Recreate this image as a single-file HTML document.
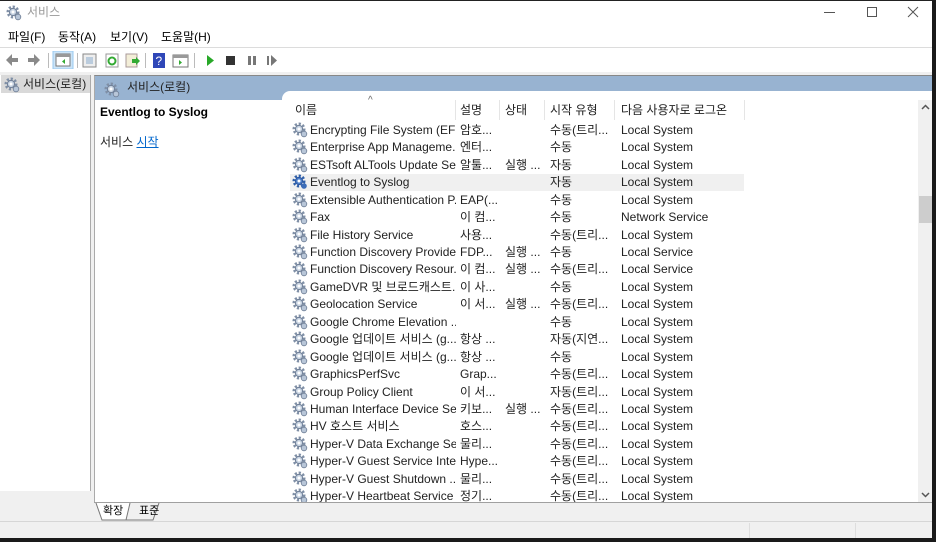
<!DOCTYPE html>
<html><head><meta charset="utf-8"><style>
*{margin:0;padding:0;box-sizing:border-box}
body{width:936px;height:542px;overflow:hidden;background:#fff;font-family:"Liberation Sans","Noto Sans CJK KR",sans-serif;font-size:12px;color:#000;position:relative}
.a{position:absolute;white-space:nowrap;line-height:15px}
.row{position:absolute;left:290px;width:454px;height:17px}
.row span{position:absolute;top:1px;white-space:nowrap;font-size:12px;line-height:15px;height:15px;color:#222;overflow:hidden}
.row span:nth-of-type(1){width:146px}
.row svg{position:absolute;left:2px;top:0}
.sep{position:absolute;top:100px;width:1px;height:20px;background:#e5e5e5}
</style></head><body>
<svg width="0" height="0" style="position:absolute"><defs>
<g id="gear"><circle cx="7" cy="7" r="5.2" fill="none" stroke="#7f8fa6" stroke-width="2.6" stroke-dasharray="2.2 1.8"/><circle cx="7" cy="7" r="3.6" fill="#c7d3e2" stroke="#6e7e96" stroke-width="1"/><circle cx="7" cy="7" r="1.5" fill="#fff"/><circle cx="12" cy="12" r="2.8" fill="#b8c6d8" stroke="#6e7e96" stroke-width="0.8"/></g>
<g id="gearb"><circle cx="7" cy="7" r="5.2" fill="none" stroke="#2f5fa8" stroke-width="2.6" stroke-dasharray="2.2 1.8"/><circle cx="7" cy="7" r="3.6" fill="#4d7fc9" stroke="#2a55a0" stroke-width="1"/><circle cx="7" cy="7" r="1.5" fill="#fff"/><circle cx="12" cy="12" r="2.8" fill="#3b6cb8"/></g>
</defs></svg>
<div class="a" style="left:0;top:0;width:936px;height:1px;background:#222"></div>
<div class="a" style="right:0;top:0;width:4px;height:542px;background:#1a1a1a"></div>
<div class="a" style="left:0;bottom:0;width:936px;height:4px;background:#1a1a1a"></div>
<svg class="a" style="left:6px;top:5px" width="16" height="16"><use href="#gear"/></svg>
<div class="a" style="left:27px;top:5px;color:#999;font-size:12px">서비스</div>
<div class="a" style="left:824px;top:12px;width:11px;height:1px;background:#555"></div>
<div class="a" style="left:867px;top:7px;width:10px;height:10px;border:1px solid #555"></div>
<svg class="a" style="left:907px;top:6px" width="12" height="12"><path d="M1 1L11 11M11 1L1 11" stroke="#555" stroke-width="1"/></svg>
<div class="a" style="left:8px;top:30px;font-size:12px">파일(F)</div>
<div class="a" style="left:58px;top:30px;font-size:12px">동작(A)</div>
<div class="a" style="left:110px;top:30px;font-size:12px">보기(V)</div>
<div class="a" style="left:161px;top:30px;font-size:12px">도움말(H)</div>
<div class="a" style="left:0;top:47px;width:932px;height:1px;background:#dcdcdc"></div>
<svg class="a" style="left:3px;top:51px" width="290" height="18">
<path d="M3 9l6-6v4h6v4h-6v4z" fill="#8a8a8a"/><path d="M37 9l-6-6v4h-6v4h6v4z" fill="#8a8a8a"/>
<rect x="45" y="2" width="1" height="15" fill="#bbb"/>
<rect x="50" y="0" width="20" height="18" fill="#cce4f7" stroke="#99c9ef"/>
<rect x="53" y="3" width="14" height="12" fill="#fff" stroke="#777"/><rect x="53" y="3" width="14" height="3" fill="#999"/><path d="M62 8l-3 2.5 3 2.5z" fill="#3a3"/>
<rect x="74" y="2" width="1" height="15" fill="#bbb"/>
<rect x="80" y="3" width="13" height="13" fill="#eee" stroke="#888"/><rect x="83" y="6" width="7" height="7" fill="#bcd"/>
<rect x="103" y="3" width="12" height="13" fill="#fff" stroke="#999"/><circle cx="109" cy="10" r="3.5" fill="none" stroke="#3a3" stroke-width="2"/>
<rect x="123" y="3" width="11" height="13" fill="#f3eed8" stroke="#a99"/><path d="M129 8h4v-2l4 4-4 4v-2h-4z" fill="#3a3"/>
<rect x="142" y="2" width="1" height="15" fill="#bbb"/>
<rect x="150" y="2" width="12" height="15" fill="#2f47b8"/><text x="152.5" y="14" fill="#fff" font-size="12" font-family="Liberation Sans">?</text>
<rect x="170" y="4" width="15" height="12" fill="#fff" stroke="#777"/><rect x="170" y="4" width="15" height="3" fill="#999"/><path d="M176 9v5l3-2.5z" fill="#3a3"/>
<rect x="191" y="2" width="1" height="15" fill="#bbb"/>
<path d="M204 4v11l7-5.5z" fill="#28a828"/>
<rect x="223" y="5" width="9" height="9" fill="#333"/>
<rect x="245" y="5" width="3" height="9" fill="#777"/><rect x="250" y="5" width="3" height="9" fill="#777"/>
<rect x="264" y="5" width="2" height="9" fill="#777"/><path d="M268 4v11l6-5.5z" fill="#777"/>
</svg>
<div class="a" style="left:0;top:72px;width:932px;height:466px;background:#f0f0f0"></div>
<div class="a" style="left:0;top:75px;width:91px;height:416px;background:#fff;border-right:1px solid #aaa"></div>
<div class="a" style="left:1px;top:75px;width:89px;height:18px;background:#d9d9d9"></div>
<svg class="a" style="left:4px;top:77px" width="16" height="16"><use href="#gear"/></svg>
<div class="a" style="left:23px;top:77px;font-size:12px;color:#222">서비스(로컬)</div>
<div class="a" style="left:94px;top:75px;width:838px;height:427px;background:#fff;border-left:1px solid #aaa;border-top:1px solid #888"></div>
<div class="a" style="left:95px;top:76px;width:837px;height:24px;background:#98b3d1"></div>
<div class="a" style="left:282px;top:91px;width:650px;height:12px;background:#fff;border-radius:8px 0 0 0"></div>
<svg class="a" style="left:104px;top:82px" width="16" height="16"><use href="#gear"/></svg>
<div class="a" style="left:127px;top:80px;font-size:12px;color:#222">서비스(로컬)</div>
<div class="a" style="left:100px;top:105px;font-weight:bold;font-size:12px">Eventlog to Syslog</div>
<div class="a" style="left:100px;top:135px;font-size:12px;color:#222">서비스 <span style="color:#0066cc;text-decoration:underline">시작</span></div>
<div class="a" style="left:295px;top:103px;font-size:12px;color:#222">이름</div>
<div class="a" style="left:368px;top:93px;font-size:10px;color:#666">^</div>
<div class="sep" style="left:455px"></div><div class="sep" style="left:499px"></div><div class="sep" style="left:544px"></div><div class="sep" style="left:614px"></div><div class="sep" style="left:744px"></div>
<div class="a" style="left:460px;top:103px;font-size:12px;color:#222">설명</div>
<div class="a" style="left:505px;top:103px;font-size:12px;color:#222">상태</div>
<div class="a" style="left:550px;top:103px;font-size:12px;color:#222">시작 유형</div>
<div class="a" style="left:621px;top:103px;font-size:12px;color:#222">다음 사용자로 로그온</div>
<div class="row" style="top:122px"><svg width="17" height="17"><use href="#gear"/></svg><span style="left:20px">Encrypting File System (EFS)</span><span style="left:170px">암호...</span><span style="left:260px">수동(트리...</span><span style="left:331px">Local System</span></div>
<div class="row" style="top:139.4px"><svg width="17" height="17"><use href="#gear"/></svg><span style="left:20px">Enterprise App Manageme...</span><span style="left:170px">엔터...</span><span style="left:260px">수동</span><span style="left:331px">Local System</span></div>
<div class="row" style="top:156.9px"><svg width="17" height="17"><use href="#gear"/></svg><span style="left:20px">ESTsoft ALTools Update Se...</span><span style="left:170px">알툴...</span><span style="left:215px">실행 ...</span><span style="left:260px">자동</span><span style="left:331px">Local System</span></div>
<div class="row" style="top:174.3px;background:#f0f0f0"><svg width="17" height="17"><use href="#gearb"/></svg><span style="left:20px">Eventlog to Syslog</span><span style="left:260px">자동</span><span style="left:331px">Local System</span></div>
<div class="row" style="top:191.7px"><svg width="17" height="17"><use href="#gear"/></svg><span style="left:20px">Extensible Authentication P...</span><span style="left:170px">EAP(...</span><span style="left:260px">수동</span><span style="left:331px">Local System</span></div>
<div class="row" style="top:209.2px"><svg width="17" height="17"><use href="#gear"/></svg><span style="left:20px">Fax</span><span style="left:170px">이 컴...</span><span style="left:260px">수동</span><span style="left:331px">Network Service</span></div>
<div class="row" style="top:226.6px"><svg width="17" height="17"><use href="#gear"/></svg><span style="left:20px">File History Service</span><span style="left:170px">사용...</span><span style="left:260px">수동(트리...</span><span style="left:331px">Local System</span></div>
<div class="row" style="top:244px"><svg width="17" height="17"><use href="#gear"/></svg><span style="left:20px">Function Discovery Provide...</span><span style="left:170px">FDP...</span><span style="left:215px">실행 ...</span><span style="left:260px">수동</span><span style="left:331px">Local Service</span></div>
<div class="row" style="top:261.4px"><svg width="17" height="17"><use href="#gear"/></svg><span style="left:20px">Function Discovery Resour...</span><span style="left:170px">이 컴...</span><span style="left:215px">실행 ...</span><span style="left:260px">수동(트리...</span><span style="left:331px">Local Service</span></div>
<div class="row" style="top:278.9px"><svg width="17" height="17"><use href="#gear"/></svg><span style="left:20px">GameDVR 및 브로드캐스트...</span><span style="left:170px">이 사...</span><span style="left:260px">수동</span><span style="left:331px">Local System</span></div>
<div class="row" style="top:296.3px"><svg width="17" height="17"><use href="#gear"/></svg><span style="left:20px">Geolocation Service</span><span style="left:170px">이 서...</span><span style="left:215px">실행 ...</span><span style="left:260px">수동(트리...</span><span style="left:331px">Local System</span></div>
<div class="row" style="top:313.7px"><svg width="17" height="17"><use href="#gear"/></svg><span style="left:20px">Google Chrome Elevation ...</span><span style="left:260px">수동</span><span style="left:331px">Local System</span></div>
<div class="row" style="top:331.2px"><svg width="17" height="17"><use href="#gear"/></svg><span style="left:20px">Google 업데이트 서비스 (g...</span><span style="left:170px">항상 ...</span><span style="left:260px">자동(지연...</span><span style="left:331px">Local System</span></div>
<div class="row" style="top:348.6px"><svg width="17" height="17"><use href="#gear"/></svg><span style="left:20px">Google 업데이트 서비스 (g...</span><span style="left:170px">항상 ...</span><span style="left:260px">수동</span><span style="left:331px">Local System</span></div>
<div class="row" style="top:366px"><svg width="17" height="17"><use href="#gear"/></svg><span style="left:20px">GraphicsPerfSvc</span><span style="left:170px">Grap...</span><span style="left:260px">수동(트리...</span><span style="left:331px">Local System</span></div>
<div class="row" style="top:383.5px"><svg width="17" height="17"><use href="#gear"/></svg><span style="left:20px">Group Policy Client</span><span style="left:170px">이 서...</span><span style="left:260px">자동(트리...</span><span style="left:331px">Local System</span></div>
<div class="row" style="top:400.9px"><svg width="17" height="17"><use href="#gear"/></svg><span style="left:20px">Human Interface Device Se...</span><span style="left:170px">키보...</span><span style="left:215px">실행 ...</span><span style="left:260px">수동(트리...</span><span style="left:331px">Local System</span></div>
<div class="row" style="top:418.3px"><svg width="17" height="17"><use href="#gear"/></svg><span style="left:20px">HV 호스트 서비스</span><span style="left:170px">호스...</span><span style="left:260px">수동(트리...</span><span style="left:331px">Local System</span></div>
<div class="row" style="top:435.8px"><svg width="17" height="17"><use href="#gear"/></svg><span style="left:20px">Hyper-V Data Exchange Se...</span><span style="left:170px">물리...</span><span style="left:260px">수동(트리...</span><span style="left:331px">Local System</span></div>
<div class="row" style="top:453.2px"><svg width="17" height="17"><use href="#gear"/></svg><span style="left:20px">Hyper-V Guest Service Inte...</span><span style="left:170px">Hype...</span><span style="left:260px">수동(트리...</span><span style="left:331px">Local System</span></div>
<div class="row" style="top:470.6px"><svg width="17" height="17"><use href="#gear"/></svg><span style="left:20px">Hyper-V Guest Shutdown ...</span><span style="left:170px">물리...</span><span style="left:260px">수동(트리...</span><span style="left:331px">Local System</span></div>
<div class="row" style="top:488px;height:14px;overflow:hidden"><svg width="17" height="17"><use href="#gear"/></svg><span style="left:20px">Hyper-V Heartbeat Service</span><span style="left:170px">정기...</span><span style="left:260px">수동(트리...</span><span style="left:331px">Local System</span></div>
<div class="a" style="left:918px;top:100px;width:14px;height:402px;background:#f0f0f0"></div>
<svg class="a" style="left:921px;top:104px" width="9" height="6"><path d="M1 5l3.5-3.5L8 5" stroke="#555" stroke-width="1.5" fill="none"/></svg>
<svg class="a" style="left:921px;top:492px" width="9" height="6"><path d="M1 1l3.5 3.5L8 1" stroke="#555" stroke-width="1.5" fill="none"/></svg>
<div class="a" style="left:919px;top:196px;width:13px;height:27px;background:#cdcdcd"></div>
<div class="a" style="left:94px;top:502px;width:838px;height:1px;background:#a0a0a0"></div>
<svg class="a" style="left:94px;top:503px" width="80" height="18"><path d="M34 0l-4 17h29l6-17" fill="#f0f0f0" stroke="#777"/><path d="M2 0l6 17h24l4-17" fill="#fff" stroke="#777"/></svg>
<div class="a" style="left:103px;top:504px;font-size:11px">확장</div>
<div class="a" style="left:139px;top:504px;font-size:11px">표준</div>
<div class="a" style="left:0;top:521px;width:932px;height:1px;background:#d6d6d6"></div>
<div class="a" style="left:0;top:522px;width:932px;height:16px;background:#f0f0f0"></div>
<div class="a" style="left:749px;top:523px;width:1px;height:15px;background:#ddd"></div>
<div class="a" style="left:855px;top:523px;width:1px;height:15px;background:#ddd"></div>
</body></html>
